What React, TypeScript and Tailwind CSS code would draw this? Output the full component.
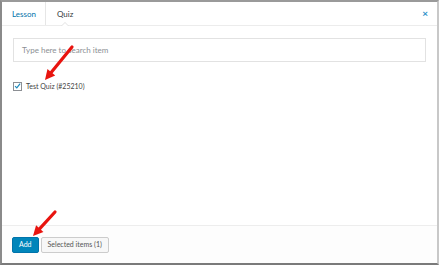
import React from "react";

function Arrow({ x1, y1, x2, y2 }: { x1: number; y1: number; x2: number; y2: number }) {
  const a = Math.atan2(y2 - y1, x2 - x1);
  const len = 10;
  const w = 5;
  const bx = x2 - Math.cos(a) * len;
  const by = y2 - Math.sin(a) * len;
  const px = -Math.sin(a) * w;
  const py = Math.cos(a) * w;
  return (
    <g>
      <line x1={x1} y1={y1} x2={bx} y2={by} stroke="#e8140f" strokeWidth={3.2} strokeLinecap="round" />
      <polygon points={`${x2},${y2} ${bx + px},${by + py} ${bx - px},${by - py}`} fill="#e8140f" />
    </g>
  );
}

export default function App() {
  return (
    <div
      className="relative w-[439px] h-[265px] bg-white border-t-2 border-l-2 border-r-2 border-b-2 border-t-[#9a9a9a] border-l-[#8a8a8a] border-r-[#c8c8c8] border-b-[#7a7a7a] flex flex-col overflow-hidden"
      style={{ fontFamily: 'Lato, "Noto Sans", sans-serif' }}
    >
      {/* Tabs */}
      <div className="flex h-[24px] border-b border-[#ececec] items-stretch shrink-0">
        <div className="flex items-center pl-[10px] pr-[9px] border-r border-[#e6e6e6] text-[8px] text-[#0073aa]">Lesson</div>
        <div className="relative flex items-center px-[11px] text-[8px] text-[#32373c]">
          Quiz
          <span className="absolute left-1/2 -translate-x-1/2 bottom-[-1px] w-0 h-0 border-l-[4px] border-r-[4px] border-b-[4px] border-l-transparent border-r-transparent border-b-[#e2e2e2]" />
          <span className="absolute left-1/2 -translate-x-1/2 bottom-[-1px] w-0 h-0 border-l-[3px] border-r-[3px] border-b-[3px] border-l-transparent border-r-transparent border-b-white" />
        </div>
        <div className="flex-1" />
        <div className="flex items-center pr-[9px] text-[10px] font-bold text-[#2a8fc9]">×</div>
      </div>

      {/* Body */}
      <div className="flex-1 px-[11px] pt-[12px]">
        <div className="h-[24px] border border-[#e2e2e2] flex items-center px-[8px] text-[8px] text-[#8c8f94]">
          Type here to search item
        </div>
        <div className="flex items-center gap-[4px] mt-[19px]">
          <div className="w-[9px] h-[9px] border border-[#8c8f94] bg-white flex items-center justify-center">
            <svg width="8" height="8" viewBox="0 0 8 8">
              <path d="M1.2 4.2 L3.2 6.2 L7 1.2" stroke="#1e8cbe" strokeWidth="1.4" fill="none" />
            </svg>
          </div>
          <span className="text-[7px] text-[#444]">Test Quiz (#25210)</span>
        </div>
      </div>

      {/* Footer */}
      <div className="h-[38px] border-t border-[#ededed] bg-[#fdfdfd] flex items-center gap-[2px] px-[10px] shrink-0">
        <div className="h-[16px] px-[6px] rounded-[2px] bg-[#0085ba] border border-[#0073aa] text-white text-[7px] flex items-center">
          Add
        </div>
        <div className="h-[16px] px-[6px] rounded-[2px] bg-[#f7f7f7] border border-[#cccccc] text-[#555] text-[7px] flex items-center">
          Selected items (1)
        </div>
      </div>

      <svg className="absolute left-[-2px] top-[-2px] pointer-events-none" width="439" height="265">
        <Arrow x1={72} y1={47} x2={45} y2={80} />
        <Arrow x1={55} y1={212} x2={33} y2={236} />
      </svg>
    </div>
  );
}
